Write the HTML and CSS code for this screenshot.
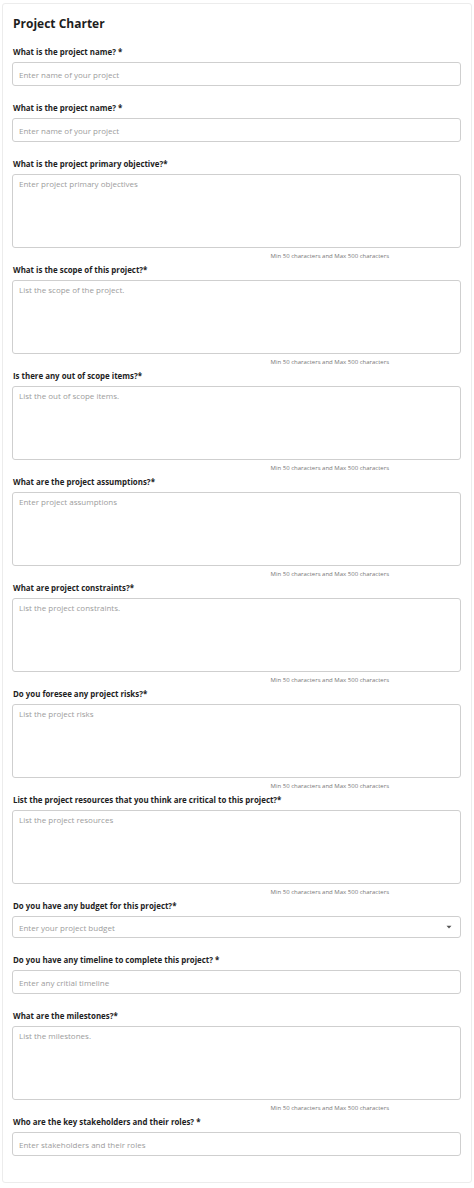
FILE: index.html
```html
<!DOCTYPE html>
<html lang="en">
<head>
<meta charset="utf-8">
<title>Project Charter</title>
<link rel="stylesheet" href="styles.css">
</head>
<body>
<form class="card">
  <h1 class="title">Project Charter</h1>

  <div class="field">
    <label class="label">What is the project name? *</label>
    <input class="input" type="text" placeholder="Enter name of your project">
  </div>

  <div class="field">
    <label class="label">What is the project name? *</label>
    <input class="input" type="text" placeholder="Enter name of your project">
  </div>

  <div class="field area">
    <label class="label">What is the project primary objective?*</label>
    <textarea class="textarea" placeholder="Enter project primary objectives"></textarea>
    <div class="help">Min 50 characters and Max 500 characters</div>
  </div>

  <div class="field area">
    <label class="label">What is the scope of this project?*</label>
    <textarea class="textarea" placeholder="List the scope of the project."></textarea>
    <div class="help">Min 50 characters and Max 500 characters</div>
  </div>

  <div class="field area">
    <label class="label">Is there any out of scope items?*</label>
    <textarea class="textarea" placeholder="List the out of scope items."></textarea>
    <div class="help">Min 50 characters and Max 500 characters</div>
  </div>

  <div class="field area">
    <label class="label">What are the project assumptions?*</label>
    <textarea class="textarea" placeholder="Enter project assumptions"></textarea>
    <div class="help">Min 50 characters and Max 500 characters</div>
  </div>

  <div class="field area">
    <label class="label">What are project constraints?*</label>
    <textarea class="textarea" placeholder="List the project constraints."></textarea>
    <div class="help">Min 50 characters and Max 500 characters</div>
  </div>

  <div class="field area">
    <label class="label">Do you foresee any project risks?*</label>
    <textarea class="textarea" placeholder="List the project risks"></textarea>
    <div class="help">Min 50 characters and Max 500 characters</div>
  </div>

  <div class="field area">
    <label class="label">List the project resources that you think are critical to this project?*</label>
    <textarea class="textarea" placeholder="List the project resources"></textarea>
    <div class="help">Min 50 characters and Max 500 characters</div>
  </div>

  <div class="field">
    <label class="label">Do you have any budget for this project?*</label>
    <div class="select">
      <span class="select-text">Enter your project budget</span>
      <svg class="caret" width="6" height="4" viewBox="0 0 6 4"><path d="M0.5 0.8 L5.5 0.8 L3 3.4 Z" fill="#555"/></svg>
    </div>
  </div>

  <div class="field">
    <label class="label">Do you have any timeline to complete this project? *</label>
    <input class="input" type="text" placeholder="Enter any critial timeline">
  </div>

  <div class="field area">
    <label class="label">What are the milestones?*</label>
    <textarea class="textarea" placeholder="List the milestones."></textarea>
    <div class="help">Min 50 characters and Max 500 characters</div>
  </div>

  <div class="field">
    <label class="label">Who are the key stakeholders and their roles? *</label>
    <input class="input" type="text" placeholder="Enter stakeholders and their roles">
  </div>
</form>
</body>
</html>
```

FILE: styles.css
```css
* { box-sizing: border-box; }

html, body {
  margin: 0;
  padding: 0;
  background: #ffffff;
}

body {
  font-family: "Open Sans", "Noto Sans", sans-serif;
  color: #222;
}

.card {
  display: flex;
  flex-direction: column;
  width: 470px;
  margin: 3px 2px 5px 2px;
  padding: 12px 10px 26px 9px;
  border: 1px solid #ececec;
  border-radius: 3px;
  background: #fff;
}

.title {
  margin: 0 0 13px 0;
  padding-left: 1px;
  font-size: 12px;
  line-height: 16px;
  font-weight: 700;
  color: #1e1e1e;
}

.field {
  display: flex;
  flex-direction: column;
  margin-bottom: 15px;
}

.field.area {
  margin-bottom: 1px;
}

.field:last-child {
  margin-bottom: 0;
}

.label {
  display: block;
  margin-bottom: 4px;
  padding: 1px 0 0 1px;
  font-size: 7.9px;
  line-height: 12px;
  font-weight: 700;
  color: #1e1e1e;
}

.input,
.textarea,
.select {
  width: 449px;
  border: 1px solid #cfcfcf;
  border-radius: 3px;
  background: #fff;
  font-family: "Open Sans", "Noto Sans", sans-serif;
  font-size: 8px;
  color: #333;
  outline: none;
  margin: 0;
}

.input {
  height: 24px;
  padding: 0 6px;
}

.textarea {
  height: 74px;
  padding: 3px 6px;
  resize: none;
  line-height: 12px;
  display: block;
}

.input::placeholder,
.textarea::placeholder {
  color: #9c9c9c;
  opacity: 1;
}

.select {
  height: 22px;
  padding: 0 8px 0 6px;
  display: flex;
  align-items: center;
  justify-content: space-between;
}

.select-text {
  color: #9c9c9c;
}

.caret {
  display: block;
}

.help {
  margin-top: 2px;
  height: 12px;
  line-height: 12px;
  font-size: 6px;
  color: #777;
  text-align: right;
  padding-right: 72px;
}
```
